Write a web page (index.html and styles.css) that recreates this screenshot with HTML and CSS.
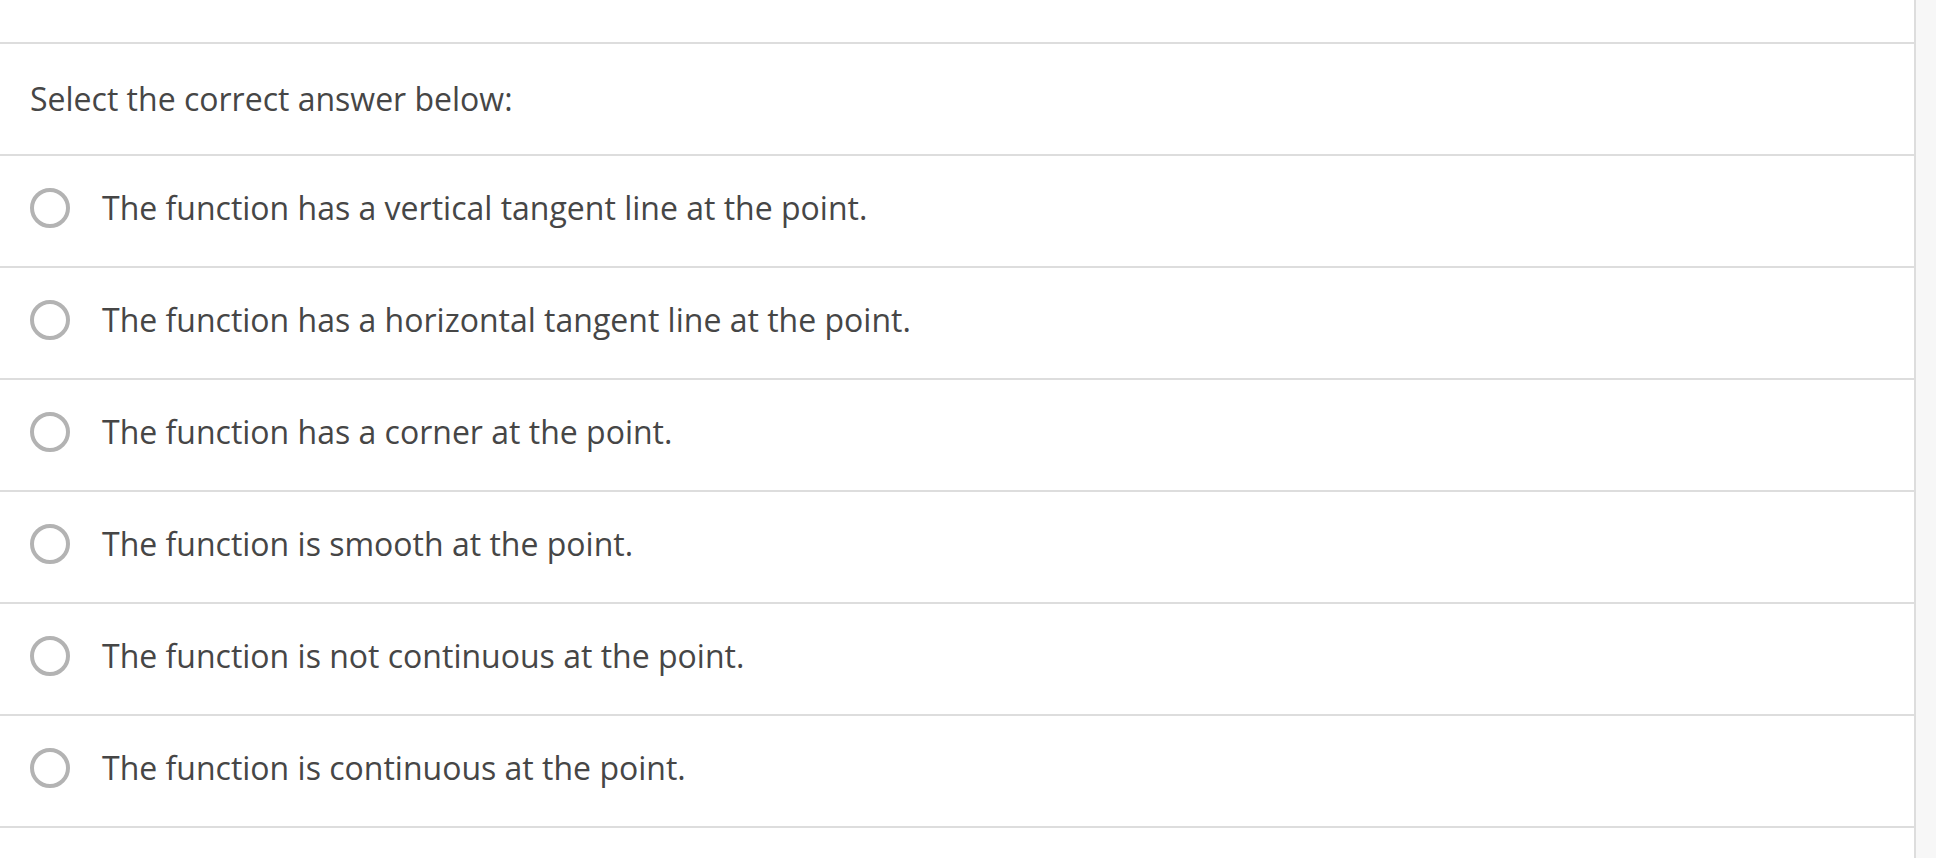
FILE: index.html
```html
<!DOCTYPE html>
<html lang="en">
<head>
<meta charset="utf-8">
<title>Select the correct answer</title>
<link rel="stylesheet" href="styles.css">
</head>
<body>
<div class="page">
  <main class="content">
    <div class="top-spacer"></div>
    <div class="row prompt"><span class="label">Select the correct answer below:</span></div>
    <ul class="options">
      <li class="row option"><span class="radio"></span><span class="label">The function has a vertical tangent line at the point.</span></li>
      <li class="row option"><span class="radio"></span><span class="label">The function has a horizontal tangent line at the point.</span></li>
      <li class="row option"><span class="radio"></span><span class="label">The function has a corner at the point.</span></li>
      <li class="row option"><span class="radio"></span><span class="label">The function is smooth at the point.</span></li>
      <li class="row option"><span class="radio"></span><span class="label">The function is not continuous at the point.</span></li>
      <li class="row option"><span class="radio"></span><span class="label">The function is continuous at the point.</span></li>
    </ul>
  </main>
  <aside class="side"></aside>
</div>
</body>
</html>
```

FILE: styles.css
```css
html, body {
  margin: 0;
  padding: 0;
  background: #ffffff;
}

body {
  font-family: "Open Sans", "Noto Sans", sans-serif;
  color: #464646;
  font-size: 32px;
}

.page {
  display: flex;
  height: 858px;
  overflow: hidden;
}

.content {
  flex: 1;
  display: flex;
  flex-direction: column;
  background: #ffffff;
}

.side {
  width: 20px;
  background: #f7f7f7;
  border-left: 2px solid #dddddd;
}

.top-spacer {
  height: 42px;
  flex: none;
}

.options {
  list-style: none;
  margin: 0;
  padding: 0;
}

.row {
  box-sizing: border-box;
  height: 112px;
  border-top: 2px solid #dddddd;
  display: flex;
  align-items: center;
  padding-left: 30px;
}

.option {
  padding-bottom: 7px;
}

.options .row:last-child {
  border-bottom: 2px solid #dddddd;
  height: 114px;
}

.radio {
  box-sizing: border-box;
  width: 40px;
  height: 40px;
  border: 4px solid #b3b3b3;
  border-radius: 50%;
  flex: none;
  margin-right: 32px;
}

.label {
  line-height: 44px;
}
```
